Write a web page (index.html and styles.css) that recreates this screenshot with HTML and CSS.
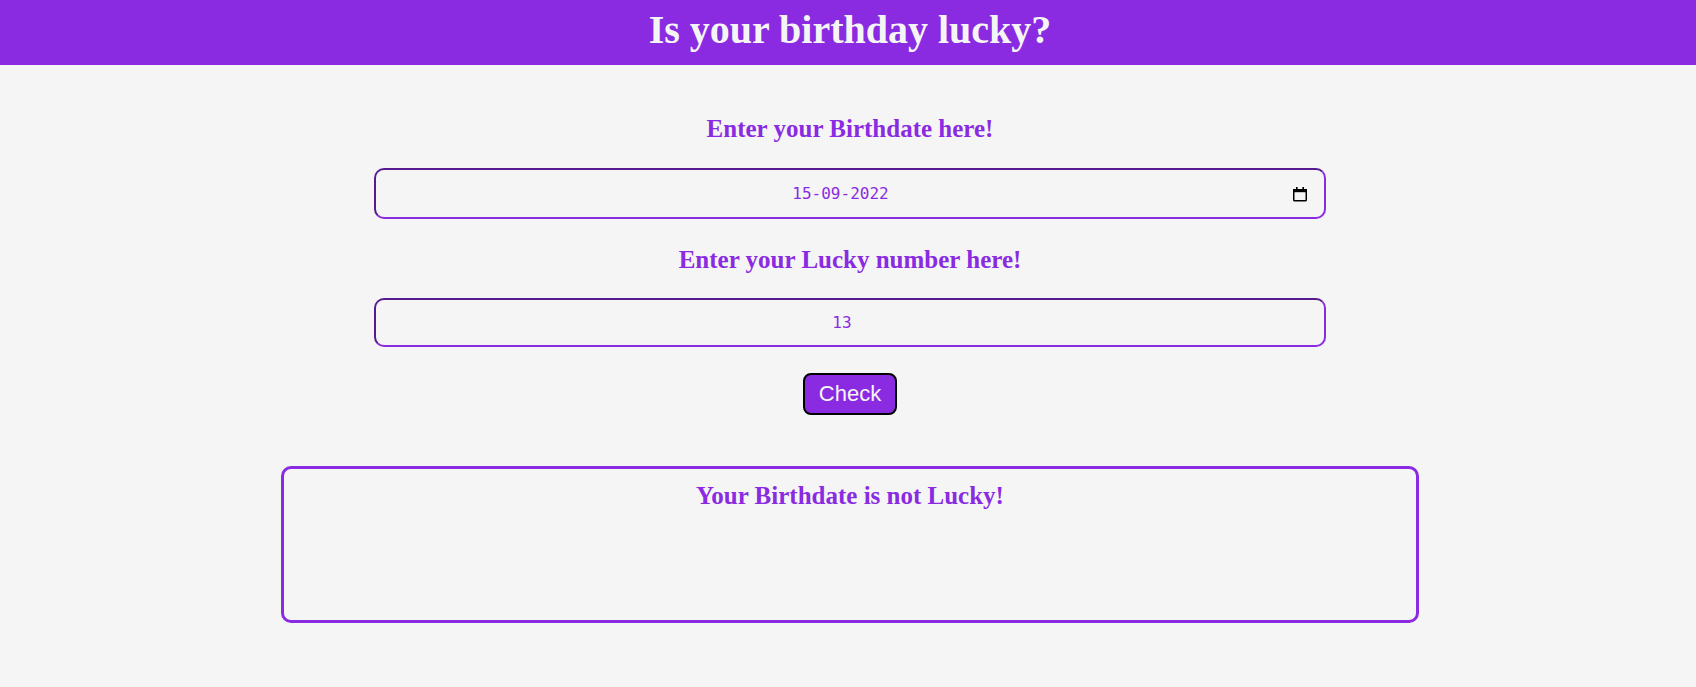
FILE: index.html
```html
<!DOCTYPE html>
<html lang="en">
<head>
<meta charset="utf-8">
<title>Is your birthday lucky?</title>
<link rel="stylesheet" href="styles.css">
</head>
<body>
<header class="topbar">
  <h1 class="title">Is your birthday lucky?</h1>
</header>
<main class="page">
  <h2 class="label label-date">Enter your Birthdate here!</h2>
  <div class="field field-date">
    <input class="field-input" type="text" value="15-09-2022" aria-label="Birthdate">
    <svg class="cal-icon" width="16" height="16" viewBox="0 0 16 16" aria-hidden="true">
      <rect x="1.75" y="3.75" width="12.5" height="11" rx="0.8" fill="none" stroke="#000" stroke-width="1.5"/>
      <rect x="1" y="3" width="14" height="3.2" fill="#000"/>
      <rect x="4" y="1" width="1.6" height="3" fill="#000"/>
      <rect x="10.4" y="1" width="1.6" height="3" fill="#000"/>
    </svg>
  </div>
  <h2 class="label label-number">Enter your Lucky number here!</h2>
  <div class="field field-number">
    <input class="field-input" type="number" value="13" aria-label="Lucky number">
  </div>
  <button class="check-btn" type="button">Check</button>
  <section class="result">
    <h2 class="result-text">Your Birthdate is not Lucky!</h2>
  </section>
</main>
</body>
</html>
```
FILE: styles.css
```css
html, body {
  margin: 0;
  padding: 0;
}
body {
  background: #f5f5f5;
  font-family: "Liberation Serif", "Times New Roman", serif;
}
.topbar {
  background: #8a2be2;
  height: 65px;
  box-sizing: border-box;
  padding: 10px 0 0 4px;
  text-align: center;
}
.title {
  margin: 0;
  color: #f5f5f5;
  font-size: 40px;
  font-weight: bold;
  line-height: 40px;
}
.page {
  padding-left: 4px;
  display: flex;
  flex-direction: column;
  align-items: center;
}
.label {
  margin: 0;
  color: #8a2be2;
  font-size: 25px;
  font-weight: bold;
}
.label-date { margin-top: 50px; }
.label-number { margin-top: 27px; }
.field {
  box-sizing: border-box;
  width: 952px;
  border: 2px inset #8a2be2;
  border-radius: 10px;
  display: flex;
  align-items: center;
  padding: 0 16px 0 0;
}
.field-date { height: 51px; margin-top: 25px; }
.field-date .field-input { padding-left: 13px; }
.field-number { height: 49px; margin-top: 24px; }
.field-input {
  flex: 1;
  min-width: 0;
  border: none;
  background: transparent;
  outline: none;
  text-align: center;
  color: #8a2be2;
  font-family: "DejaVu Sans Mono", "Liberation Mono", monospace;
  font-size: 16px;
  padding: 0;
  -moz-appearance: textfield;
}
.field-input::-webkit-inner-spin-button,
.field-input::-webkit-outer-spin-button {
  -webkit-appearance: none;
  margin: 0;
}
.cal-icon {
  flex: none;
}
.check-btn {
  margin-top: 26px;
  box-sizing: border-box;
  width: 94px;
  height: 42px;
  background: #8a2be2;
  color: #f5f5f5;
  border: 2px solid #000;
  border-radius: 8px;
  font-family: "Liberation Sans", Arial, sans-serif;
  font-size: 22px;
  padding: 0;
}
.result {
  margin-top: 51px;
  box-sizing: border-box;
  width: 1138px;
  height: 157px;
  border: 3px solid #8a2be2;
  border-radius: 10px;
  text-align: center;
  padding-top: 13px;
}
.result-text {
  margin: 0;
  color: #8a2be2;
  font-size: 25px;
  font-weight: bold;
}
```
